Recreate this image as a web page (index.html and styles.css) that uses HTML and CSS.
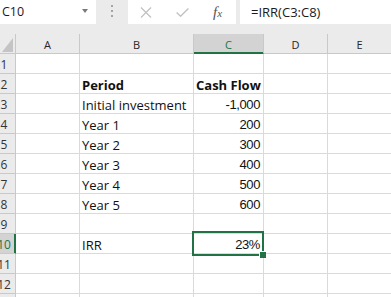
FILE: index.html
```html
<!DOCTYPE html>
<html>
<head>
<meta charset="utf-8">
<link rel="stylesheet" href="styles.css">
</head>
<body>
<div class="app">
  <div class="fbar">
    <div class="namebox">
      <span class="nb-text">C10</span>
      <svg class="nb-drop" width="6" height="4" viewBox="0 0 6 4"><path d="M0 0H6L3 4Z" fill="#7a7a7a"/></svg>
    </div>
    <div class="grip"><i></i><i></i><i></i></div>
    <div class="actions">
      <svg class="ic-x" width="12" height="11" viewBox="0 0 12 11"><path d="M1 0.5L11 10.5M11 0.5L1 10.5" stroke="#c2c2c2" stroke-width="1.3" fill="none"/></svg>
      <svg class="ic-check" width="13" height="9" viewBox="0 0 13 9"><path d="M0.6 4.6L4.6 8.2L12.4 0.6" fill="none" stroke="#c2c2c2" stroke-width="1.4"/></svg>
      <span class="fx">f<span class="fx-x">x</span></span>
    </div>
    <div class="gap"></div>
    <div class="formula">=IRR(C3:C8)</div>
  </div>

  <div class="sheet">
    <div class="corner"><svg width="11" height="14" viewBox="0 0 11 14"><path d="M11 0V14H0Z" fill="#c4c4c4"/></svg></div>
    <div class="ch">A</div>
    <div class="ch">B</div>
    <div class="ch ch-sel">C</div>
    <div class="ch">D</div>
    <div class="ch">E</div>

    <div class="rh"><span>1</span></div><div class="c"></div><div class="c"></div><div class="c"></div><div class="c"></div><div class="c"></div>
    <div class="rh"><span>2</span></div><div class="c"></div><div class="c t b">Period</div><div class="c t b">Cash Flow</div><div class="c"></div><div class="c"></div>
    <div class="rh"><span>3</span></div><div class="c"></div><div class="c t">Initial investment</div><div class="c n">-1,000</div><div class="c"></div><div class="c"></div>
    <div class="rh"><span>4</span></div><div class="c"></div><div class="c t">Year 1</div><div class="c n">200</div><div class="c"></div><div class="c"></div>
    <div class="rh"><span>5</span></div><div class="c"></div><div class="c t">Year 2</div><div class="c n">300</div><div class="c"></div><div class="c"></div>
    <div class="rh"><span>6</span></div><div class="c"></div><div class="c t">Year 3</div><div class="c n">400</div><div class="c"></div><div class="c"></div>
    <div class="rh"><span>7</span></div><div class="c"></div><div class="c t">Year 4</div><div class="c n">500</div><div class="c"></div><div class="c"></div>
    <div class="rh"><span>8</span></div><div class="c"></div><div class="c t">Year 5</div><div class="c n">600</div><div class="c"></div><div class="c"></div>
    <div class="rh"><span>9</span></div><div class="c"></div><div class="c"></div><div class="c"></div><div class="c"></div><div class="c"></div>
    <div class="rh rh-sel"><span>10</span></div><div class="c"></div><div class="c t">IRR</div><div class="c n active">23%<div class="sel"><div class="handle"></div></div></div><div class="c"></div><div class="c"></div>
    <div class="rh"><span>11</span></div><div class="c"></div><div class="c"></div><div class="c"></div><div class="c"></div><div class="c"></div>
    <div class="rh"><span>12</span></div><div class="c"></div><div class="c"></div><div class="c"></div><div class="c"></div><div class="c"></div>
    <div class="rh"><span>13</span></div><div class="c"></div><div class="c"></div><div class="c"></div><div class="c"></div><div class="c"></div>
  </div>
</div>
</body>
</html>
```

FILE: styles.css
```css
html, body {
  margin: 0;
  padding: 0;
  background: #ffffff;
}
body {
  width: 391px;
  height: 297px;
  overflow: hidden;
  font-family: "Open Sans", "Liberation Sans", sans-serif;
  color: #111;
}
.app {
  width: 391px;
}

/* formula bar */
.fbar {
  display: flex;
  height: 24px;
  padding-bottom: 10px;
  background: #ebebeb;
}
.namebox {
  width: 96px;
  background: #fff;
  display: flex;
  align-items: center;
  padding-left: 2px;
  box-sizing: border-box;
}
.nb-text {
  font-size: 12.5px;
  line-height: 24px;
  color: #1a1a1a;
}
.nb-drop {
  margin-left: auto;
  margin-right: 8px;
  margin-top: -2px;
}
.grip {
  width: 32px;
  display: flex;
  flex-direction: column;
  align-items: center;
  padding-top: 5px;
  gap: 3px;
  box-sizing: border-box;
}
.grip i {
  display: block;
  width: 2px;
  height: 2px;
  background: #a4a4a4;
}
.actions {
  width: 108px;
  background: #fff;
  display: flex;
  align-items: center;
}
.ic-x {
  margin-left: 12px;
}
.ic-check {
  margin-left: 24px;
  align-self: flex-end;
  margin-bottom: 7px;
}
.fx {
  margin-left: 24px;
  font-family: "Liberation Serif", serif;
  font-style: italic;
  font-size: 15px;
  color: #555;
  line-height: 24px;
}
.fx-x {
  font-size: 11px;
}
.gap {
  width: 4px;
}
.formula {
  flex: 1;
  background: #fff;
  padding-left: 11px;
  font-size: 13px;
  line-height: 24px;
  color: #1a1a1a;
}

/* sheet grid */
.sheet {
  display: grid;
  grid-template-columns: 16px 64px 114px 70px 64px 64px;
  grid-auto-rows: 20px;
}
.sheet > div {
  box-sizing: border-box;
  border-right: 1px solid #dadada;
  border-bottom: 1px solid #dadada;
  min-width: 0;
}
.corner {
  background: #ebebeb;
  display: flex;
  align-items: flex-end;
  justify-content: flex-end;
  padding: 0 2px 1px 0;
}
.corner svg {
  display: block;
}
.sheet > .corner,
.sheet > .ch,
.sheet > .rh {
  border-color: #c9c9c9;
}
.ch {
  background: #ebebeb;
  text-align: center;
  font-size: 11px;
  line-height: 19px;
  padding-top: 1px;
  color: #262626;
}
.sheet > .ch-sel {
  background: #d3d3d3;
  color: #217346;
  border-bottom-color: #217346;
  box-shadow: inset 0 -1px 0 #217346;
}
.rh {
  background: #ebebeb;
  font-size: 12px;
  line-height: 16px;
  padding-top: 3px;
  color: #333;
}
.rh span {
  display: flex;
  justify-content: center;
  width: 8px;
  white-space: nowrap;
}
.sheet > .rh-sel {
  background: #d3d3d3;
  color: #217346;
  border-right-color: #217346;
  box-shadow: inset -1px 0 0 #217346;
}
.t {
  font-size: 13px;
  line-height: 16px;
  padding: 3px 0 0 2px;
  white-space: nowrap;
  overflow: visible;
}
.b {
  font-weight: 700;
}
.n {
  font-family: "Liberation Sans", Arial, sans-serif;
  font-size: 13px;
  letter-spacing: -0.4px;
  line-height: 16px;
  padding: 3px 3px 0 0;
  text-align: right;
  white-space: nowrap;
}
.active {
  position: relative;
}
.sel {
  position: absolute;
  left: -2px;
  right: -1px;
  top: -3px;
  bottom: -3px;
  border: 2px solid #217346;
}
.handle {
  position: absolute;
  right: -4px;
  bottom: -4px;
  width: 6px;
  height: 6px;
  background: #217346;
  box-shadow: -1px -1px 0 #fff;
}
```
